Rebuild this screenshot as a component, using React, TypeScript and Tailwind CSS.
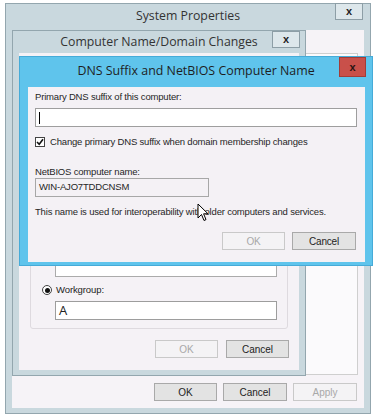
import React from 'react';

const ui = { fontFamily: '"Liberation Sans", Arial, sans-serif' };
const title = { fontFamily: '"Open Sans", "Noto Sans", sans-serif' };

function Btn({ label, disabled, w = 'w-[63px]' }: { label: string; disabled?: boolean; w?: string }) {
  return (
    <div
      className={`${w} h-[18px] flex items-center justify-center text-[10px] border ${
        disabled
          ? 'bg-[#f4f3f5] border-[#c9c9c9] text-[#a8a8a8]'
          : 'bg-[#e3e3e3] border-[#a9a9a9] text-[#222]'
      }`}
    >
      {label}
    </div>
  );
}

function CloseBtn({ red }: { red?: boolean }) {
  return (
    <div
      className={`flex items-center justify-center border text-[11px] font-bold leading-none ${
        red
          ? 'w-[27px] h-[20px] bg-[#c9504a] border-[#a33c37] text-[#2b1412]'
          : 'w-[28px] h-[17px] bg-[#dde7eb] border-[#8d9ea6] text-[#222]'
      }`}
      style={ui}
    >
      x
    </div>
  );
}

function Cursor() {
  return (
    <svg width="12" height="19" viewBox="0 0 12 19" className="absolute left-[197px] top-[203px]">
      <path
        d="M1 1 L1 15 L4.5 11.5 L7 17.5 L9 16.6 L6.6 10.8 L11 10.8 Z"
        fill="#fff"
        stroke="#000"
        strokeWidth="1"
        strokeLinejoin="round"
      />
    </svg>
  );
}

export default function App() {
  return (
    <div className="relative w-[379px] h-[420px] bg-white overflow-hidden" style={ui}>
      {/* System Properties */}
      <div className="absolute left-[5px] top-[3px] w-[366px] h-[411px] border border-[#93a6ae] bg-[#c9d8de] flex flex-col">
        <div className="relative h-[26px] flex items-center justify-center">
          <span className="text-[12.3px] text-[#333] -mt-[1px]" style={title}>System Properties</span>
          <div className="absolute right-[7px] top-[-1px]">
            <CloseBtn />
          </div>
        </div>
        <div className="flex-1 mx-[6px] mb-[5px] bg-[#f6f3f7] flex flex-col">
          <div className="flex-1 pt-[23px] pr-[6px] pl-[6px] flex">
            <div className="flex-1 bg-[#fbfafc] border border-[#cfcfcf]" />
          </div>
          <div className="flex justify-end gap-[6px] pt-[8px] pb-[7px] pr-[7px]">
            <Btn label="OK" />
            <Btn label="Cancel" w="w-[64px]" />
            <Btn label="Apply" disabled w="w-[64px]" />
          </div>
        </div>
      </div>

      {/* Computer Name/Domain Changes */}
      <div className="absolute left-[12px] top-[30px] w-[294px] h-[346px] border border-[#93a6ae] bg-[#c9d8de] flex flex-col">
        <div className="relative h-[22px] flex items-center justify-center">
          <span className="text-[12.3px] text-[#333]" style={title}>Computer Name/Domain Changes</span>
          <div className="absolute right-[5px] top-0">
            <CloseBtn />
          </div>
        </div>
        <div className="flex-1 mx-[6px] mb-[5px] bg-[#f5f2f6] flex flex-col">
          <div className="flex-1 flex flex-col justify-end px-[11px]">
            <div className="border border-[#dedadf] rounded-[3px] pl-[24px] pr-[10px] pb-[8px] pt-[10px] flex flex-col">
              <div className="flex items-center gap-[4px] h-[12px] text-[9.5px] -ml-[12px]">
                <span className="w-[9px] h-[9px] rounded-full border border-[#555] bg-white" />
                <span>Domain:</span>
              </div>
              <div className="mt-[5px] h-[19px] bg-white border border-[#ababab]" />
              <div className="mt-[7px] flex items-center gap-[4px] h-[12px] text-[9.5px] tracking-[-0.1px] -ml-[13px] text-[#222]">
                <span className="w-[10px] h-[10px] rounded-full border border-[#444] bg-white flex items-center justify-center">
                  <span className="w-[5px] h-[5px] rounded-full bg-[#111]" />
                </span>
                <span>Workgroup:</span>
              </div>
              <div className="mt-[5px] h-[19px] bg-white border border-[#9d9d9d] flex items-center pl-[3px] text-[13px] text-[#222]" style={title}>
                A
              </div>
            </div>
          </div>
          <div className="flex justify-end gap-[8px] pt-[11px] pb-[12px] pr-[10px]">
            <Btn label="OK" disabled />
            <Btn label="Cancel" />
          </div>
        </div>
      </div>

      {/* DNS Suffix and NetBIOS Computer Name */}
      <div className="absolute left-[19px] top-[56px] w-[354px] h-[210px] border border-[#46abd8] bg-[#5fc4ec] flex flex-col">
        <div className="relative h-[30px] flex items-center justify-center">
          <span className="text-[12.4px] text-[#1e1e1e] mt-[-1px]" style={title}>DNS Suffix and NetBIOS Computer Name</span>
          <div className="absolute right-[6px] top-0">
            <CloseBtn red />
          </div>
        </div>
        <div className="flex-1 ml-[8px] mr-[7px] mb-[3px] bg-[#f4f1f5] flex flex-col pt-[4px] pl-[7px] pr-[8px] text-[9.5px] tracking-[-0.18px] text-[#262626]">
          <div className="h-[12px] leading-[12px]">Primary DNS suffix of this computer:</div>
          <div className="mt-[5px] h-[19px] bg-white border border-[#9e9e9e] flex items-center pl-[3px]">
            <div className="w-px h-[12px] bg-black" />
          </div>
          <div className="mt-[9px] h-[12px] flex items-center gap-[5px]">
            <span className="w-[10px] h-[10px] border border-[#444] bg-white flex items-center justify-center">
              <svg width="8" height="8" viewBox="0 0 8 8">
                <path d="M1 4 L3.2 6.3 L7 1.3" fill="none" stroke="#111" strokeWidth="1.6" />
              </svg>
            </span>
            <span className="leading-[12px]">Change primary DNS suffix when domain membership changes</span>
          </div>
          <div className="mt-[18px] h-[12px] leading-[12px]">NetBIOS computer name:</div>
          <div className="h-[19px] w-[174px] border border-[#a7a7a7] flex items-center pl-[3px]">
            WIN-AJO7TDDCNSM
          </div>
          <div className="mt-[9px] h-[12px] leading-[12px]">
            This name is used for interoperability with older computers and services.
          </div>
          <div className="mt-[14px] flex justify-end gap-[7px] pr-[1px]">
            <Btn label="OK" disabled />
            <Btn label="Cancel" w="w-[64px]" />
          </div>
        </div>
      </div>

      <Cursor />
    </div>
  );
}
